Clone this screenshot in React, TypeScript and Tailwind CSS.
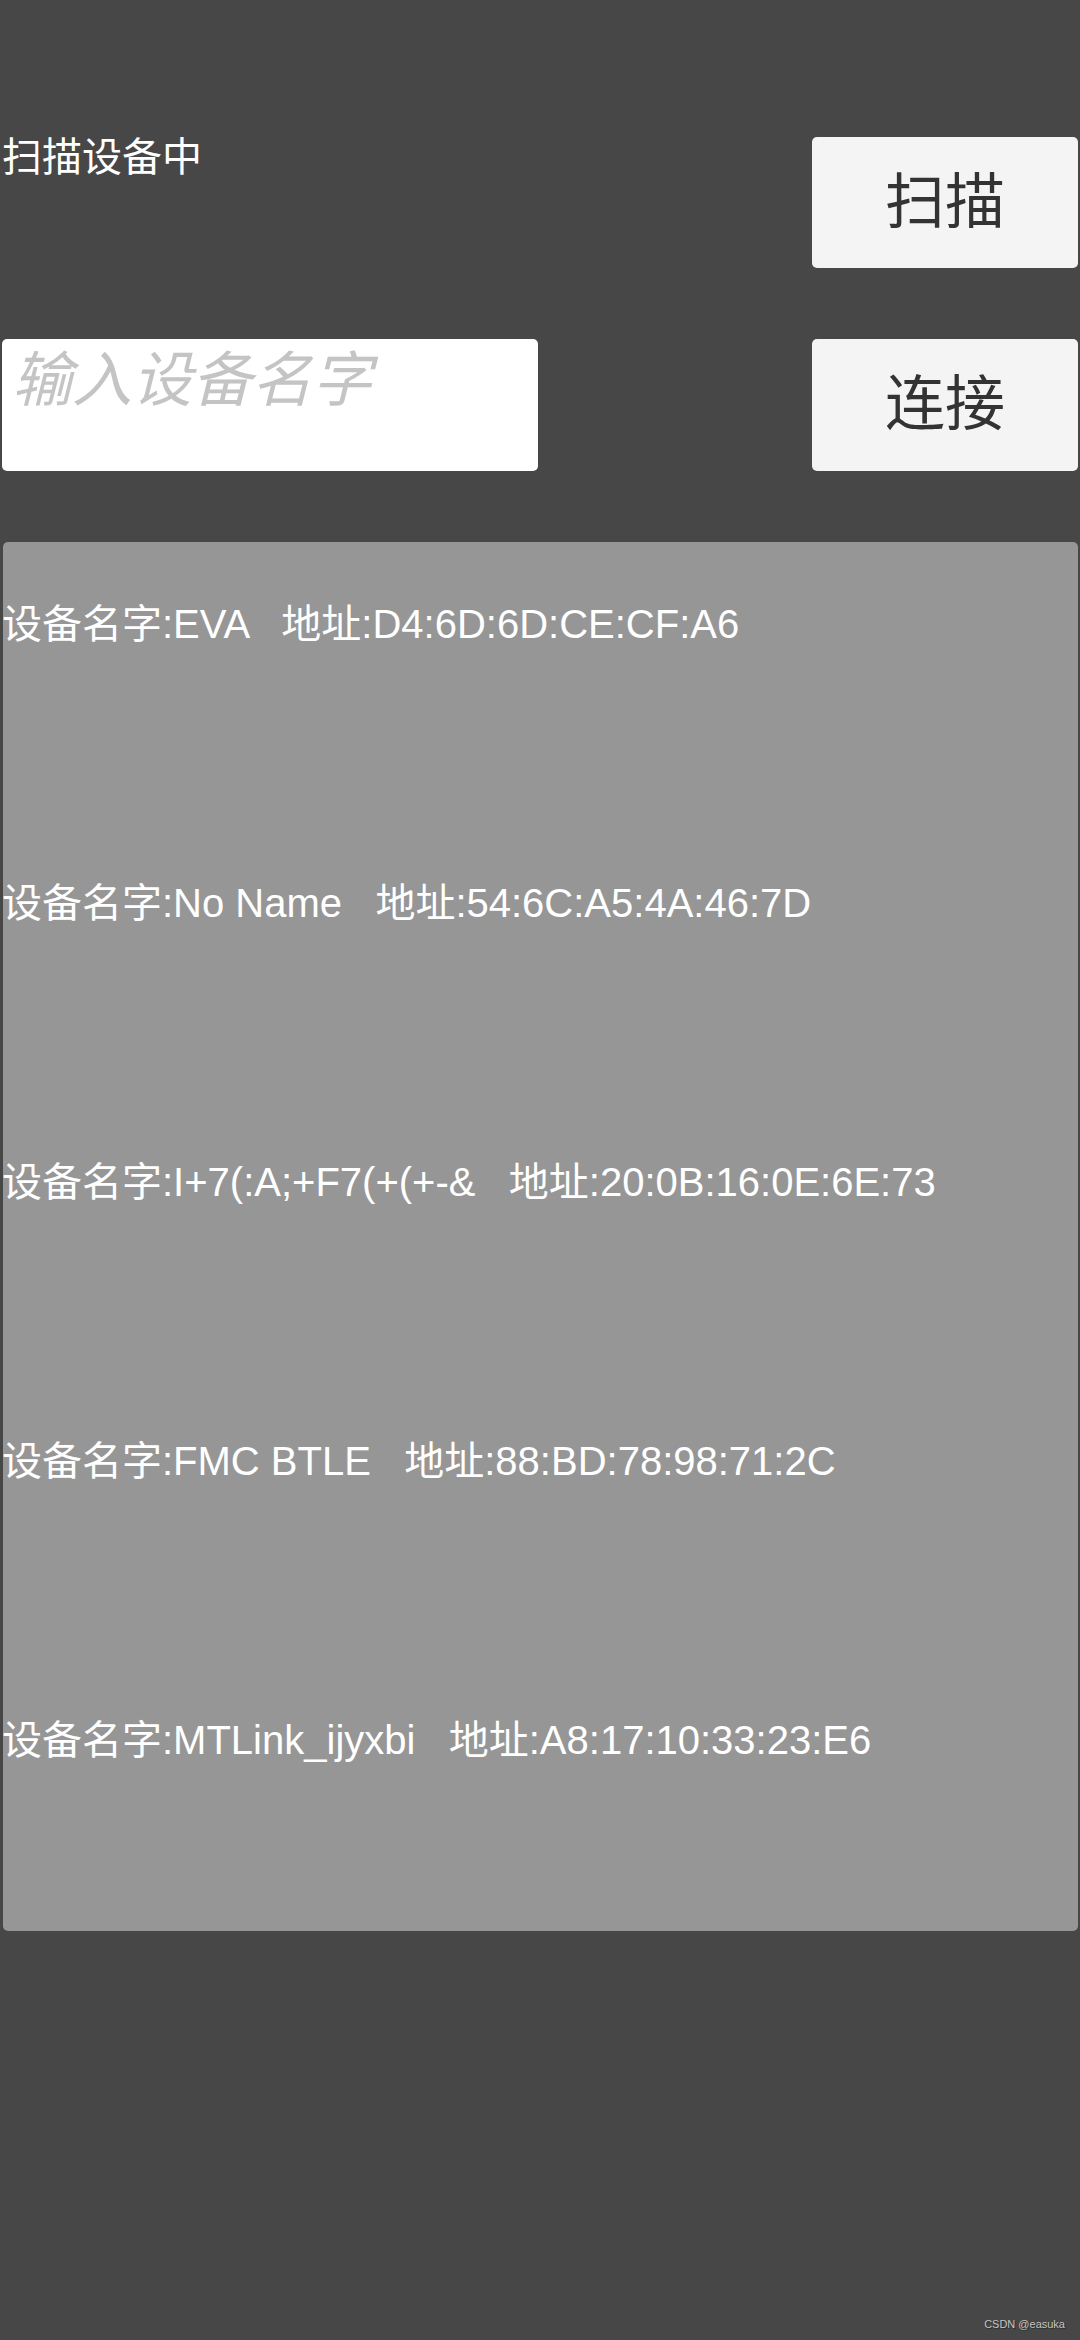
import React from "react";

const devices = [
  { name: "EVA", addr: "D4:6D:6D:CE:CF:A6" },
  { name: "No Name", addr: "54:6C:A5:4A:46:7D" },
  { name: "I+7(:A;+F7(+(+-&", addr: "20:0B:16:0E:6E:73" },
  { name: "FMC BTLE", addr: "88:BD:78:98:71:2C" },
  { name: "MTLink_ijyxbi", addr: "A8:17:10:33:23:E6" },
];

const font = "font-['Liberation_Sans','Noto_Sans_CJK_SC',sans-serif]";

export default function App() {
  return (
    <div className={`relative min-h-[2340px] w-[1080px] bg-[#474747] pl-[2px] pr-[2px] pt-[137px] ${font}`}>
      <div className="flex h-[131px] items-start justify-between">
        <span className="mt-[-4px] text-[40px] leading-[48px] text-white">扫描设备中</span>
        <button className="h-[131px] w-[266px] rounded-[5px] bg-[#f4f4f4] text-[60px] leading-none text-[#333333]">
          扫描
        </button>
      </div>
      <div className="mt-[71px] flex h-[132px] items-start justify-between">
        <input
          className="box-border h-[132px] w-[536px] rounded-[5px] bg-white pb-[55px] pl-[10px] pt-[5px] text-[60px] italic text-[#333333] outline-none placeholder:italic placeholder:text-[#c4c4c4]"
          placeholder="输入设备名字"
        />
        <button className="h-[132px] w-[266px] rounded-[5px] bg-[#f4f4f4] text-[60px] leading-none text-[#333333]">
          连接
        </button>
      </div>
      <div className="ml-[1px] mt-[71px] flex h-[1389px] flex-col gap-[239px] overflow-hidden rounded-[5px] bg-[#969696] pt-[62px]">
        {devices.map((d) => (
          <div key={d.addr} className="-ml-[1px] whitespace-pre text-[40px] leading-[40px] text-white">
            {`设备名字:${d.name}   地址:${d.addr}`}
          </div>
        ))}
      </div>
      <div className="absolute bottom-[9px] right-[15px] text-[11px] leading-[13px] text-[#c4c4c4] [text-shadow:1px_1px_1px_rgba(0,0,0,0.4)]">
        CSDN @easuka
      </div>
    </div>
  );
}
